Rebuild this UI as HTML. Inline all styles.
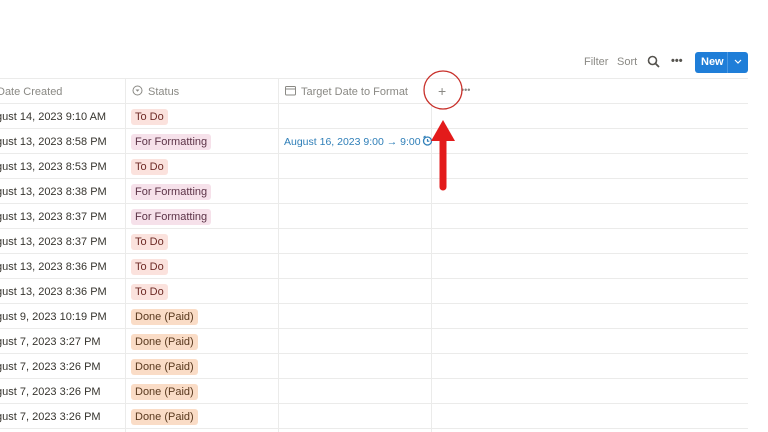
<!DOCTYPE html>
<html><head><style>
body{margin:0;width:768px;height:432px;background:#fff;overflow:hidden;font-family:"Liberation Sans",sans-serif;position:relative;color:#37352f}
.a{position:absolute}
.hl{position:absolute;left:0;width:748px;height:1px;background:#ebebea}
.vl{position:absolute;top:78px;width:1px;height:354px;background:#ebebea}
.cell{position:absolute;font-size:11px;line-height:25px;white-space:nowrap;margin-top:2px}
.pill{display:inline-block;padding:0 4px;line-height:16px;border-radius:3px;font-size:11px}
.todo{background:#fbe2dd;color:#6d2a25}
.ff{background:#f6e1ea;color:#5c3347}
.dp{background:#fadcc6;color:#59391e}
.h{color:#8a8984;font-size:11px}
</style></head><body>
<div class="a h" style="left:584px;top:56px">Filter</div>
<div class="a h" style="left:617px;top:56px">Sort</div>
<svg class="a" style="left:647px;top:55px" width="14" height="14"><circle cx="5.5" cy="5.5" r="4" fill="none" stroke="#55534e" stroke-width="1.6"/><path d="M8.5 8.5L12 12" stroke="#55534e" stroke-width="1.8"/></svg>
<div class="a" style="left:671px;top:55px;font-size:11px;color:#55534e;font-weight:bold">•••</div>
<div class="a" style="left:695px;top:52px;width:53px;height:21px;background:#1f7ed8;border-radius:3px"></div>
<div class="a" style="left:701px;top:56px;color:#fff;font-weight:bold;font-size:11px">New</div>
<div class="a" style="left:727px;top:52px;width:1px;height:21px;background:#4b98e2"></div>
<svg class="a" style="left:734px;top:59px" width="8" height="6"><path d="M1 1L4 4L7 1" stroke="#fff" fill="none" stroke-width="1.2"/></svg>

<div class="hl" style="top:78px"></div>
<div class="hl" style="top:103px"></div>
<div class="hl" style="top:128px"></div><div class="hl" style="top:153px"></div><div class="hl" style="top:178px"></div><div class="hl" style="top:203px"></div><div class="hl" style="top:228px"></div><div class="hl" style="top:253px"></div><div class="hl" style="top:278px"></div><div class="hl" style="top:303px"></div><div class="hl" style="top:328px"></div><div class="hl" style="top:353px"></div><div class="hl" style="top:378px"></div><div class="hl" style="top:403px"></div><div class="hl" style="top:428px"></div>
<div class="vl" style="left:125px"></div><div class="vl" style="left:278px"></div><div class="vl" style="left:431px;top:103px;height:329px"></div>

<div class="cell h" style="left:-3px;top:78px">Date Created</div>
<svg class="a" style="left:132px;top:85px" width="11" height="11"><circle cx="5.5" cy="5.5" r="4.5" fill="none" stroke="#8a8984"/><path d="M3.5 4.5L5.5 6.8L7.5 4.5Z" fill="#8a8984"/></svg>
<div class="cell h" style="left:148px;top:78px">Status</div>
<svg class="a" style="left:285px;top:85px" width="11" height="11"><rect x="0.5" y="1.5" width="10" height="8.5" rx="1" fill="none" stroke="#8a8984"/><path d="M0.5 4h10" stroke="#8a8984"/></svg>
<div class="cell h" style="left:301px;top:78px">Target Date to Format</div>
<div class="cell" style="left:438px;top:77px;color:#8a8984;font-size:14px">+</div>
<div class="cell" style="left:461px;top:76px;color:#8a8984;font-size:9px">•••</div>

<div class="cell" style="left:-4px;top:103px">gust 14, 2023 9:10 AM</div>
<div class="cell" style="left:-4px;top:128px">gust 13, 2023 8:58 PM</div>
<div class="cell" style="left:-4px;top:153px">gust 13, 2023 8:53 PM</div>
<div class="cell" style="left:-4px;top:178px">gust 13, 2023 8:38 PM</div>
<div class="cell" style="left:-4px;top:203px">gust 13, 2023 8:37 PM</div>
<div class="cell" style="left:-4px;top:228px">gust 13, 2023 8:37 PM</div>
<div class="cell" style="left:-4px;top:253px">gust 13, 2023 8:36 PM</div>
<div class="cell" style="left:-4px;top:278px">gust 13, 2023 8:36 PM</div>
<div class="cell" style="left:-4px;top:303px">gust 9, 2023 10:19 PM</div>
<div class="cell" style="left:-4px;top:328px">gust 7, 2023 3:27 PM</div>
<div class="cell" style="left:-4px;top:353px">gust 7, 2023 3:26 PM</div>
<div class="cell" style="left:-4px;top:378px">gust 7, 2023 3:26 PM</div>
<div class="cell" style="left:-4px;top:403px">gust 7, 2023 3:26 PM</div>

<div class="cell" style="left:131px;top:103px"><span class="pill todo">To Do</span></div>
<div class="cell" style="left:131px;top:128px"><span class="pill ff">For Formatting</span></div>
<div class="cell" style="left:131px;top:153px"><span class="pill todo">To Do</span></div>
<div class="cell" style="left:131px;top:178px"><span class="pill ff">For Formatting</span></div>
<div class="cell" style="left:131px;top:203px"><span class="pill ff">For Formatting</span></div>
<div class="cell" style="left:131px;top:228px"><span class="pill todo">To Do</span></div>
<div class="cell" style="left:131px;top:253px"><span class="pill todo">To Do</span></div>
<div class="cell" style="left:131px;top:278px"><span class="pill todo">To Do</span></div>
<div class="cell" style="left:131px;top:303px"><span class="pill dp">Done (Paid)</span></div>
<div class="cell" style="left:131px;top:328px"><span class="pill dp">Done (Paid)</span></div>
<div class="cell" style="left:131px;top:353px"><span class="pill dp">Done (Paid)</span></div>
<div class="cell" style="left:131px;top:378px"><span class="pill dp">Done (Paid)</span></div>
<div class="cell" style="left:131px;top:403px"><span class="pill dp">Done (Paid)</span></div>

<div class="cell" style="left:284px;top:128px;color:#2f7fb8;font-size:10.5px">August 16, 2023 9:00 → 9:00</div>
<svg class="a" style="left:422px;top:135px" width="11" height="11"><circle cx="5.5" cy="6" r="4" fill="none" stroke="#2f7fb8" stroke-width="1.3"/><path d="M5.5 4v2.2h1.8M1.5 2.5l2-1.5" stroke="#2f7fb8" fill="none" stroke-width="1.2"/></svg>

<svg class="a" style="left:0;top:0" width="768" height="432">
<circle cx="443" cy="90" r="19" fill="none" stroke="#c8302a" stroke-width="1.3"/>
<path d="M443 187V138" stroke="#e31b1b" stroke-width="7" stroke-linecap="round"/>
<path d="M431 141L443 120L455 141Z" fill="#e31b1b"/>
</svg>
</body></html>
